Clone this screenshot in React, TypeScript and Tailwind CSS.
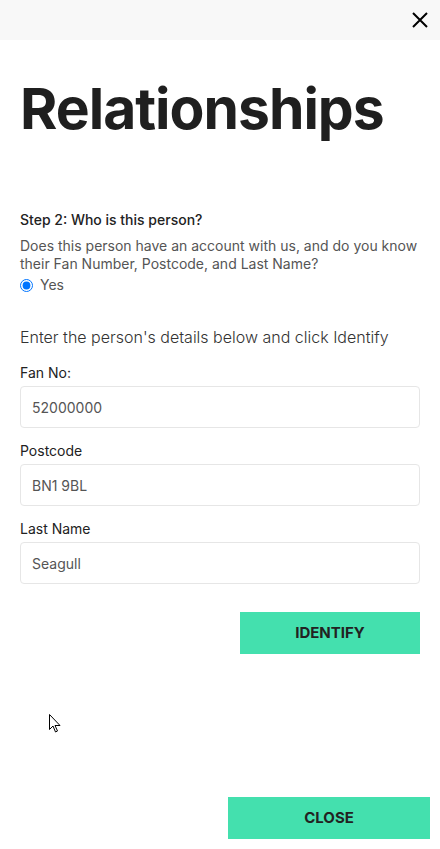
import React from "react";

const fields = [
  { label: "Fan No:", value: "52000000" },
  { label: "Postcode", value: "BN1 9BL" },
  { label: "Last Name", value: "Seagull" },
];

export default function App() {
  return (
    <div className="relative flex h-[849px] w-[440px] flex-col bg-white font-['Inter',sans-serif] text-[#1f1f1f]">
      <div className="flex h-10 items-center justify-end bg-[#f8f8f8] pr-[11px]">
        <button type="button" aria-label="Close" className="text-black">
          <svg width="18" height="18" viewBox="0 0 18 18" fill="none" stroke="currentColor" strokeWidth="2">
            <path d="M2 2 L16 16 M16 2 L2 16" />
          </svg>
        </button>
      </div>

      <div className="px-5">
        <h1 className="mt-[34px] text-[57px] font-bold leading-[70px] tracking-[-1px] text-[#1f1f1f]">
          Relationships
        </h1>

        <div className="mt-[66px] text-sm font-medium leading-5 text-[#222]">Step 2: Who is this person?</div>
        <p className="mt-[7px] text-sm leading-[18px] text-[#555]">
          Does this person have an account with us, and do you know their Fan Number, Postcode, and Last Name?
        </p>
        <label className="mt-[2px] flex items-center gap-[7px] text-sm leading-5 text-[#555]">
          <input type="radio" defaultChecked className="m-0 h-[13px] w-[13px] accent-[#0075ff]" />
          Yes
        </label>

        <p className="mt-[30px] text-base font-light leading-6 text-[#333]">
          Enter the person's details below and click Identify
        </p>

        <div className="mt-[15px] flex flex-col gap-[14px]">
          {fields.map((f) => (
            <div key={f.label} className="flex flex-col gap-1">
              <div className="text-sm leading-[18px] text-[#222]">{f.label}</div>
              <input
                readOnly
                value={f.value}
                className="h-[42px] w-full rounded-[4px] border border-[#e6e6e6] px-[11px] text-sm text-[#555] outline-none"
              />
            </div>
          ))}
        </div>

        <div className="mt-7 flex justify-end">
          <button
            type="button"
            className="h-[42px] w-[180px] bg-[#44e0ae] text-[15px] font-bold text-[#222]"
          >
            IDENTIFY
          </button>
        </div>
      </div>

      <div className="mt-auto mb-[10px] flex justify-end pr-[10px]">
        <button type="button" className="h-[42px] w-[202px] bg-[#44e0ae] text-[15px] font-bold text-[#222]">
          CLOSE
        </button>
      </div>

      <svg className="absolute left-[49px] top-[714px]" width="12" height="19" viewBox="0 0 12 19">
        <path d="M0.5 0.5 L0.5 15.5 L4 12 L6.5 18 L8.5 17 L6 11.5 L11 11.5 Z" fill="white" stroke="black" strokeWidth="1" />
      </svg>
    </div>
  );
}
